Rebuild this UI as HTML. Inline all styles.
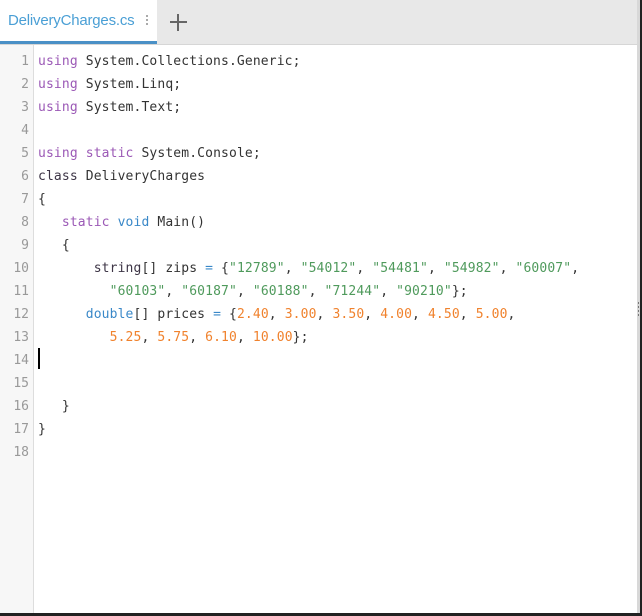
<!DOCTYPE html>
<html><head><meta charset="utf-8"><style>
html,body{margin:0;padding:0;}
body{width:642px;height:616px;position:relative;overflow:hidden;background:#fff;font-family:"Liberation Sans",sans-serif;}
.hdr{position:absolute;left:0;top:0;width:637px;height:44px;background:#e8e8e8;border-bottom:1px solid #d6d6d6;}
.tab{position:absolute;left:0;top:0;width:157px;height:41px;background:#fff;border-bottom:3px solid #4a90c6;}
.tab span{position:absolute;left:8px;top:12px;font-size:15px;color:#4a9fd5;letter-spacing:-0.2px;}
.dots{position:absolute;left:146px;top:15px;width:2px;}
.dots i{display:block;width:2px;height:2px;background:#aaa;margin-bottom:2px;}
.plus{position:absolute;left:170px;top:21px;width:17px;height:2px;background:#666;}
.plus2{position:absolute;left:177px;top:14px;width:2px;height:17px;background:#666;}
.gut{position:absolute;left:0;top:45px;width:33px;height:568px;background:#f7f7f7;border-right:1px solid #ddd;}
.nums{position:absolute;left:0;top:50px;width:29px;text-align:right;font-family:"DejaVu Sans Mono",monospace;font-size:13px;line-height:23px;color:#999;}
.code{position:absolute;left:38px;top:50px;font-family:"DejaVu Sans Mono",monospace;font-size:13px;letter-spacing:0.13px;line-height:23px;color:#333;white-space:pre;}
.k{color:#9b59b6}.b{color:#3a88c8}.s{color:#4f9a5c}.n{color:#f0822d}.d{color:#3d3546}
.cur{position:absolute;left:38px;top:348px;width:2px;height:21px;background:#000;}
.rs1{position:absolute;left:637px;top:0;width:3px;height:613px;background:#d8d8d8;}
.rs2{position:absolute;left:640px;top:0;width:2px;height:616px;background:#222;}
.bot{position:absolute;left:0;top:613px;width:642px;height:3px;background:#222;}
.grip{position:absolute;left:638px;top:302px;width:1px;}
.grip i{display:block;width:1px;height:2px;background:#777;margin-bottom:2px;}
</style></head><body>
<div class="hdr"></div>
<div class="tab"><span>DeliveryCharges.cs</span></div>
<div class="dots"><i></i><i></i><i></i></div>
<div class="plus"></div><div class="plus2"></div>
<div class="gut"></div>
<div class="nums">1<br>2<br>3<br>4<br>5<br>6<br>7<br>8<br>9<br>10<br>11<br>12<br>13<br>14<br>15<br>16<br>17<br>18</div>
<div class="code"><span class="k">using</span> System.Collections.Generic;
<span class="k">using</span> System.Linq;
<span class="k">using</span> System.Text;

<span class="k">using</span> <span class="k">static</span> System.Console;
<span class="d">class</span> DeliveryCharges
{
   <span class="k">static</span> <span class="b">void</span> Main()
   {
       <span class="d">string</span>[] zips <span class="b">=</span> {<span class="s">"12789"</span>, <span class="s">"54012"</span>, <span class="s">"54481"</span>, <span class="s">"54982"</span>, <span class="s">"60007"</span>,
         <span class="s">"60103"</span>, <span class="s">"60187"</span>, <span class="s">"60188"</span>, <span class="s">"71244"</span>, <span class="s">"90210"</span>};
      <span class="b">double</span>[] prices <span class="b">=</span> {<span class="n">2.40</span>, <span class="n">3.00</span>, <span class="n">3.50</span>, <span class="n">4.00</span>, <span class="n">4.50</span>, <span class="n">5.00</span>,
         <span class="n">5.25</span>, <span class="n">5.75</span>, <span class="n">6.10</span>, <span class="n">10.00</span>};


   }
}
</div>
<div class="cur"></div>
<div class="rs1"></div><div class="rs2"></div><div class="bot"></div>
<div class="grip"><i></i><i></i><i></i><i></i></div>
</body></html>
